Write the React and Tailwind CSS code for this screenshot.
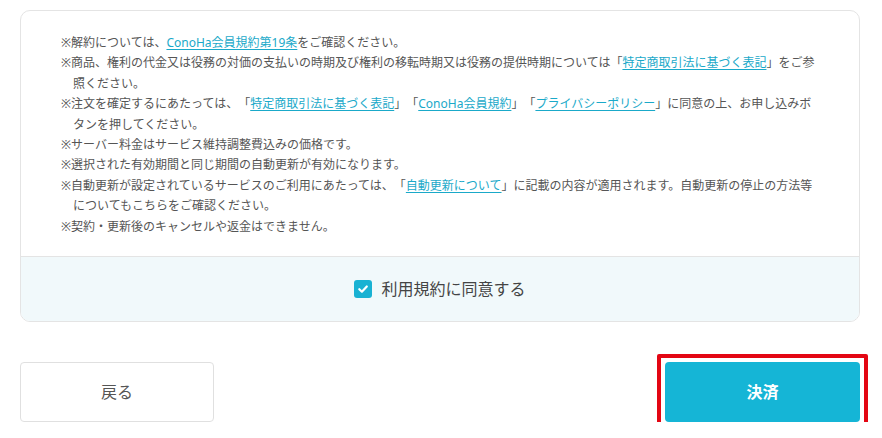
import React, { useState } from "react";

const Link = ({ children }) => (
  <a href="#" className="text-[#1aa9c9] underline underline-offset-2">
    {children}
  </a>
);

const notes = [
  <>
    ※解約については、<Link>ConoHa会員規約第19条</Link>をご確認ください。
  </>,
  <>
    ※商品、権利の代金又は役務の対価の支払いの時期及び権利の移転時期又は役務の提供時期については「
    <Link>特定商取引法に基づく表記</Link>」をご参照ください。
  </>,
  <>
    ※注文を確定するにあたっては、「<Link>特定商取引法に基づく表記</Link>」「
    <Link>ConoHa会員規約</Link>」「<Link>プライバシーポリシー</Link>
    」に同意の上、お申し込みボタンを押してください。
  </>,
  <>※サーバー料金はサービス維持調整費込みの価格です。</>,
  <>※選択された有効期間と同じ期間の自動更新が有効になります。</>,
  <>
    ※自動更新が設定されているサービスのご利用にあたっては、「
    <Link>自動更新について</Link>
    」に記載の内容が適用されます。自動更新の停止の方法等についてもこちらをご確認ください。
  </>,
  <>※契約・更新後のキャンセルや返金はできません。</>,
];

const App = () => {
  const [agreed, setAgreed] = useState(true);

  return (
    <div className="bg-white pl-[20px] pr-[22px] pt-[10px] font-['Noto_Sans','Noto_Sans_CJK_JP',sans-serif] [text-spacing-trim:space-all]">
      <div className="rounded-[10px] border border-[#e4e4e4] overflow-hidden">
        <ul className="px-[40px] pt-[22px] pb-[19px] text-[12px] leading-[1.7] text-[#555]">
          {notes.map((n, i) => (
            <li key={i} className="pl-[1em] -indent-[1em]">
              {n}
            </li>
          ))}
        </ul>
        <div className="flex items-center justify-center h-[65px] border-t border-[#e4e4e4] bg-[#f1f9fb]">
          <label
            className="flex items-center gap-[9px] cursor-pointer"
            onClick={() => setAgreed(!agreed)}
          >
            <span
              className={
                agreed
                  ? "flex items-center justify-center w-[18px] h-[18px] rounded-[3px] bg-[#19b2d3]"
                  : "flex items-center justify-center w-[18px] h-[18px] rounded-[3px] border border-[#bbb] bg-white"
              }
            >
              {agreed && (
                <svg width="12" height="12" viewBox="0 0 12 12" fill="none">
                  <path
                    d="M2.3 6.2 L4.9 8.7 L9.8 3.5"
                    stroke="white"
                    strokeWidth="2.2"
                    strokeLinecap="round"
                    strokeLinejoin="round"
                  />
                </svg>
              )}
            </span>
            <span className="text-[16px] text-[#444]">利用規約に同意する</span>
          </label>
        </div>
      </div>

      <div className="flex justify-between items-center mt-[40px]">
        <button className="w-[194px] h-[60px] rounded-[4px] border border-[#e0e0e0] bg-white text-[16px] text-[#555]">
          戻る
        </button>
        <div className="relative">
          <span className="absolute -inset-[8px] border-[4px] border-[#e30613] rounded-[2px]" />
          <button className="relative w-[195px] h-[60px] rounded-[4px] bg-[#15b5d6] text-[16px] font-bold text-white">
            決済
          </button>
        </div>
      </div>
    </div>
  );
};

export default App;
